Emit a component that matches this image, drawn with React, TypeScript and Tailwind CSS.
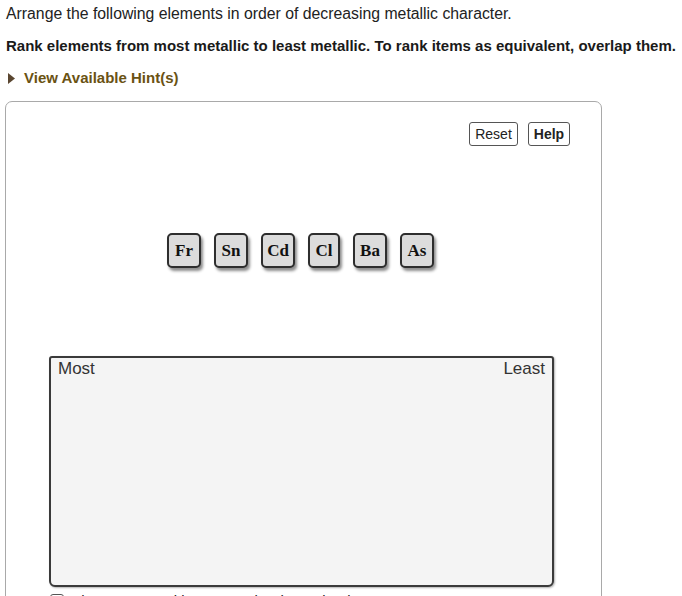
const tiles = [
  { label: "Fr", w: "w-[34px]" },
  { label: "Sn", w: "w-[34px]" },
  { label: "Cd", w: "w-[34px]" },
  { label: "Cl", w: "w-[32px]" },
  { label: "Ba", w: "w-[34px]" },
  { label: "As", w: "w-[34px]" },
];

function Tile({ label, w }: { label: string; w: string }) {
  return (
    <div
      className={`${w} h-[35px] flex items-center justify-center rounded-[5px] border-2 border-[#2e2e2e] bg-[#dcdcdc] shadow-[2px_3px_3px_rgba(0,0,0,0.45)] text-[17px] text-[#111] font-['Liberation_Serif',serif] font-semibold`}
    >
      {label}
    </div>
  );
}

export default function App() {
  return (
    <div className="w-[682px] h-[596px] overflow-hidden bg-white text-[#1a1a1a] font-['Liberation_Sans',Arial,sans-serif]">
      <div className="pl-[6px] pt-[5px] text-[15.8px] leading-[18px] text-[#222]">
        Arrange the following elements in order of decreasing metallic character.
      </div>
      <div className="pl-[6px] pt-[14px] text-[15px] leading-[18px] font-bold">
        Rank elements from most metallic to least metallic. To rank items as equivalent, overlap them.
      </div>
      <div className="pl-[8px] pt-[14px] flex items-center gap-[9px] text-[15px] leading-[18px] font-bold text-[#6a5213]">
        <svg width="7" height="11" viewBox="0 0 7 11">
          <path d="M0 0 L7 5.5 L0 11 Z" fill="#5a4630" />
        </svg>
        <span>View Available Hint(s)</span>
      </div>

      <div className="ml-[5px] mt-[14px] w-[597px] h-[520px] rounded-[7px] border border-[#a9a9a9]">
        <div className="flex justify-end gap-[10px] pr-[31px] pt-[20px]">
          <button className="w-[49px] h-[24px] rounded-[3px] border border-[#555] bg-white text-[14px] text-[#222]">
            Reset
          </button>
          <button className="w-[42px] h-[24px] rounded-[3px] border border-[#555] bg-white text-[14px] font-bold text-[#222]">
            Help
          </button>
        </div>

        <div className="flex gap-[13px] pl-[161px] pt-[87px]">
          {tiles.map((t) => (
            <Tile key={t.label} label={t.label} w={t.w} />
          ))}
        </div>

        <div className="ml-[43px] mt-[88px] w-[505px] h-[231px] rounded-b-[6px] rounded-t-[3px] border-2 border-[#3a3a3a] bg-[#f4f4f4] shadow-[1px_1px_2px_rgba(0,0,0,0.3)]">
          <div className="flex justify-between px-[7px] pt-[1px] text-[17px] leading-[20px] text-[#333]">
            <span>Most</span>
            <span>Least</span>
          </div>
        </div>

        <div className="ml-[44px] mt-[3px] flex items-center gap-[8px] text-[15px] text-[#222]">
          <div className="w-[14px] h-[14px] rounded-[3px] border border-[#555] bg-white" />
          <span>The correct ranking cannot be determined.</span>
        </div>
      </div>
    </div>
  );
}
